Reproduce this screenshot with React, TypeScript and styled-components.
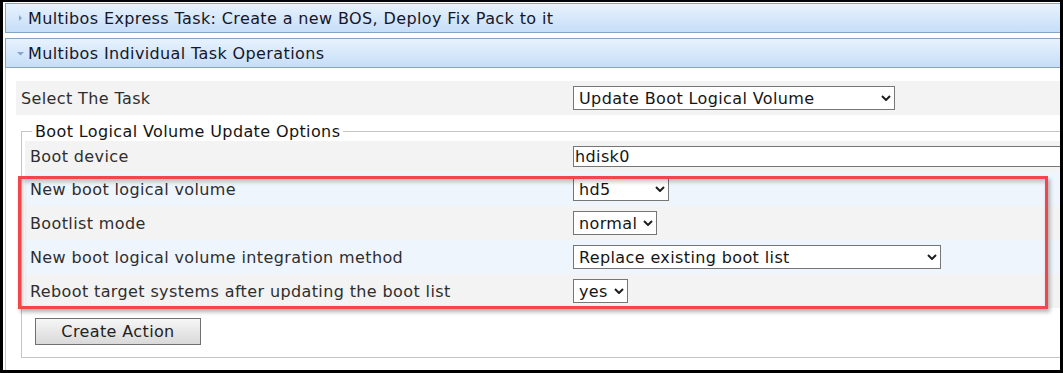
import React from "react";
import styled, { createGlobalStyle } from "styled-components";

const GlobalStyle = createGlobalStyle`
  html, body { margin: 0; padding: 0; background: #000; }
  body { font-family: "DejaVu Sans", Verdana, sans-serif; letter-spacing: 0.38px; }
  * { box-sizing: border-box; }
`;

const Frame = styled.div`
  position: relative;
  width: 1063px;
  height: 373px;
  background: #000;
  padding: 2px 3px 3px 3px;
`;

const Page = styled.div`
  height: 100%;
  background: #fff;
  overflow: hidden;
  padding: 1px 0 0 2px;
`;

const Content = styled.div`
  width: 1120px;
`;

const SectionHeader = styled.div`
  height: 30px;
  border: 1px solid #84a3c5;
  background: linear-gradient(#e7f2fd, #c6def8);
  display: flex;
  align-items: center;
  gap: 3px;
  padding-left: 11px;
  font-size: 16px;
  color: #16162a;
  & + & {
    margin-top: 5px;
  }
`;

const Caret = styled.svg`
  width: 8px;
  height: 8px;
  flex: none;
  fill: #86a6c8;
`;

const Panel = styled.div`
  border-left: 1px solid #c8c8c8;
  padding: 13px 0 40px 10px;
`;

const TaskRow = styled.div`
  display: grid;
  grid-template-columns: 552px 1fr;
  align-items: center;
  padding: 5px 0 5px 5px;
  background: #f3f3f3;
`;

const Label = styled.span`
  font-size: 16px;
  color: #2e2e2e;
  white-space: nowrap;
`;

const Fieldset = styled.fieldset`
  margin: 7px 0 0 5px;
  border: 1px solid #c4c4c4;
  padding: 0 0 12px 3px;
  min-width: 0;
`;

const Legend = styled.legend`
  margin-left: 7px;
  padding: 0 3px;
  font-size: 16px;
  color: #141414;
`;

const FieldRow = styled.div<{ $tint: "grey" | "blue" }>`
  display: grid;
  grid-template-columns: 543px 1fr;
  align-items: center;
  padding: 5px 0 5px 5px;
  background: ${(p) => (p.$tint === "grey" ? "#f3f3f3" : "#eef5fd")};
`;

const SelectBox = styled.div<{ $w: number }>`
  position: relative;
  width: ${(p) => p.$w}px;
  height: 24px;
`;

const Select = styled.select`
  appearance: none;
  -webkit-appearance: none;
  width: 100%;
  height: 100%;
  border: 1px solid #767676;
  border-radius: 0;
  background: #fff;
  color: #151515;
  font-family: "DejaVu Sans", Verdana, sans-serif;
  font-size: 16px;
  letter-spacing: 0.38px;
  padding: 0 0 0 5px;
  margin: 0;
  outline: none;
`;

const Chevron = styled.svg`
  position: absolute;
  right: 4px;
  top: 9px;
  width: 10px;
  height: 6px;
  pointer-events: none;
  fill: none;
  stroke: #1e1e1e;
  stroke-width: 2;
`;

const TextInput = styled.input`
  width: 520px;
  height: 21px;
  border: 1px solid #767676;
  padding: 0 1px;
  font-family: "DejaVu Sans", Verdana, sans-serif;
  font-size: 16px;
  letter-spacing: 0.38px;
  color: #151515;
  background: #fff;
  margin: 0;
`;

const ActionButton = styled.button`
  margin: 10px 0 0 10px;
  width: 166px;
  height: 27px;
  border: 1px solid #707070;
  background: linear-gradient(#f6f6f6, #d9d9d9);
  font-family: "DejaVu Sans", Verdana, sans-serif;
  font-size: 16px;
  letter-spacing: 0.38px;
  color: #222;
  padding: 0;
`;

const Highlight = styled.div`
  position: absolute;
  left: 18px;
  top: 176px;
  width: 1030px;
  height: 133px;
  border: 3px solid #f1464b;
  box-shadow: 2px 3px 4px rgba(0, 0, 0, 0.3), inset 2px 3px 4px rgba(0, 0, 0, 0.22);
  pointer-events: none;
`;

type DropProps = { width: number; value: string; options: string[] };

const Dropdown: React.FC<DropProps> = ({ width, value, options }) => (
  <SelectBox $w={width}>
    <Select defaultValue={value}>
      {options.map((o) => (
        <option key={o}>{o}</option>
      ))}
    </Select>
    <Chevron viewBox="0 0 10 6">
      <polyline points="1,1 5,5 9,1" />
    </Chevron>
  </SelectBox>
);

export default function App() {
  return (
    <>
      <GlobalStyle />
      <Frame>
        <Page>
          <Content>
            <SectionHeader>
              <Caret viewBox="0 0 8 8">
                <polygon points="2,1 5,4 2,7" />
              </Caret>
              Multibos Express Task: Create a new BOS, Deploy Fix Pack to it
            </SectionHeader>
            <SectionHeader>
              <Caret viewBox="0 0 8 8">
                <polygon points="0,3 7,3 3.5,6.5" />
              </Caret>
              Multibos Individual Task Operations
            </SectionHeader>
            <Panel>
              <TaskRow>
                <Label>Select The Task</Label>
                <Dropdown
                  width={322}
                  value="Update Boot Logical Volume"
                  options={["Update Boot Logical Volume", "Create a new BOS", "Remove BOS"]}
                />
              </TaskRow>
              <Fieldset>
                <Legend>Boot Logical Volume Update Options</Legend>
                <FieldRow $tint="grey">
                  <Label>Boot device</Label>
                  <TextInput defaultValue="hdisk0" />
                </FieldRow>
                <FieldRow $tint="blue">
                  <Label>New boot logical volume</Label>
                  <Dropdown width={96} value="hd5" options={["hd5", "bos_hd5"]} />
                </FieldRow>
                <FieldRow $tint="grey">
                  <Label>Bootlist mode</Label>
                  <Dropdown width={84} value="normal" options={["normal", "service", "both"]} />
                </FieldRow>
                <FieldRow $tint="blue">
                  <Label>New boot logical volume integration method</Label>
                  <Dropdown
                    width={368}
                    value="Replace existing boot list"
                    options={["Replace existing boot list", "Add to existing boot list"]}
                  />
                </FieldRow>
                <FieldRow $tint="grey">
                  <Label>Reboot target systems after updating the boot list</Label>
                  <Dropdown width={55} value="yes" options={["yes", "no"]} />
                </FieldRow>
                <ActionButton>Create Action</ActionButton>
              </Fieldset>
            </Panel>
          </Content>
        </Page>
        <Highlight />
      </Frame>
    </>
  );
}
